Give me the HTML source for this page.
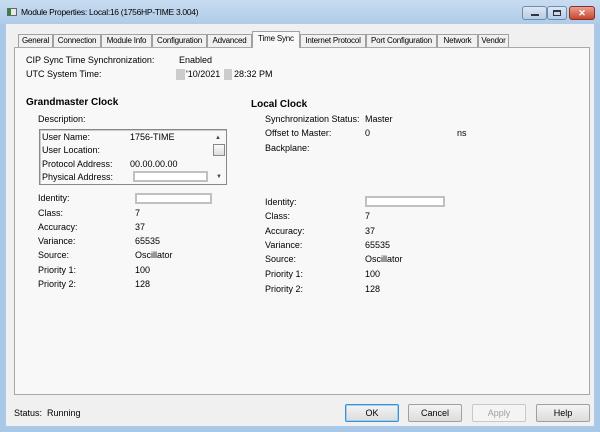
<!DOCTYPE html>
<html><head><meta charset="utf-8"><style>
*{margin:0;padding:0;box-sizing:border-box}
body{width:600px;height:432px;overflow:hidden;background:#a9c8e8;font-family:"Liberation Sans",sans-serif;font-size:9px;color:#000;position:relative}
.a{position:absolute;white-space:nowrap;line-height:11px}
.tb{position:absolute;top:6px;height:14px;border:1px solid #6d8cb0;border-radius:3px;background:linear-gradient(#dbe7f4,#b7cce4)}
.tab{position:absolute;top:34px;height:13px;border:1px solid #a0a0a0;border-bottom:none;background:#f0f0f0;text-align:center;line-height:12px;white-space:nowrap;font-size:8px;letter-spacing:-0.2px;overflow:hidden}
.btn{position:absolute;top:404px;height:18px;width:54px;border:1px solid #a0a0a0;border-radius:2px;background:linear-gradient(#f4f4f4,#dcdcdc);text-align:center;line-height:16px}
.gb{position:absolute;height:11px;border:2px solid #c0c0c0;background:#fff}
</style></head><body>
<div style="position:absolute;left:0;top:0;width:600px;height:24px;background:linear-gradient(#c8dcf0,#b0cbe8)"></div>
<div class="a" style="left:7px;top:8px;width:10px;height:8px;background:#e8e8e8;border:1px solid #666"><div style="width:3px;height:6px;background:#2a8a3a"></div></div>
<div class="a" style="left:21px;top:7px;font-size:8.5px;letter-spacing:-0.3px">Module Properties: Local:16 (1756HP-TIME 3.004)</div>
<div class="tb" style="left:522px;width:25px"><div style="position:absolute;left:8px;top:7px;width:8px;height:2px;background:#334"></div></div>
<div class="tb" style="left:547px;width:20px"><div style="position:absolute;left:5px;top:3px;width:8px;height:6px;border:1px solid #334;border-top-width:2px"></div></div>
<div class="tb" style="left:569px;width:26px;background:linear-gradient(#e8a090,#c8452f);border-color:#8a3020;color:#fff;text-align:center;font-weight:bold;font-size:9px;line-height:12px">✕</div>
<div style="position:absolute;left:6px;top:24px;width:588px;height:402px;background:#f0f0f0"></div>
<div style="position:absolute;left:14px;top:47px;width:576px;height:348px;border:1px solid #a8a8a8;background:#f8f8f8"></div>
<div class="tab" style="left:18px;width:35px">General</div>
<div class="tab" style="left:53px;width:48px">Connection</div>
<div class="tab" style="left:101px;width:51px">Module Info</div>
<div class="tab" style="left:152px;width:55px">Configuration</div>
<div class="tab" style="left:207px;width:45px">Advanced</div>
<div class="tab" style="left:252px;width:48px;top:31px;height:17px;background:#f8f8f8;line-height:13px">Time Sync</div>
<div class="tab" style="left:300px;width:66px">Internet Protocol</div>
<div class="tab" style="left:366px;width:71px">Port Configuration</div>
<div class="tab" style="left:437px;width:41px">Network</div>
<div class="tab" style="left:478px;width:31px">Vendor</div>
<div class="a" style="left:26px;top:55px">CIP Sync Time Synchronization:</div>
<div class="a" style="left:179px;top:55px">Enabled</div>
<div class="a" style="left:26px;top:69px">UTC System Time:</div>
<div class="a" style="left:176px;top:69px;width:9px;height:11px;background:#ccc"></div>
<div class="a" style="left:186px;top:69px">'10/2021</div>
<div class="a" style="left:224px;top:69px;width:8px;height:11px;background:#ccc"></div>
<div class="a" style="left:234px;top:69px">28:32 PM</div>
<div class="a" style="left:26px;top:97px;font-weight:bold;font-size:10px">Grandmaster Clock</div>
<div class="a" style="left:251px;top:99px;font-weight:bold;font-size:10px">Local Clock</div>
<div class="a" style="left:38px;top:114px">Description:</div>
<div style="position:absolute;left:39px;top:129px;width:188px;height:56px;border:1px solid #888;background:#f8f8f8;box-shadow:inset 1px 1px 0 #ccc"></div>
<div class="a" style="left:215px;top:133px;font-size:6px;color:#444">▲</div>
<div style="position:absolute;left:213px;top:144px;width:12px;height:12px;border:1px solid #888;background:linear-gradient(#fafafa,#ddd)"></div>
<div class="a" style="left:216px;top:172px;font-size:6px;color:#444">▼</div>
<div class="a" style="left:42px;top:132px">User Name:</div><div class="a" style="left:130px;top:132px">1756-TIME</div>
<div class="a" style="left:42px;top:145px">User Location:</div>
<div class="a" style="left:42px;top:159px">Protocol Address:</div><div class="a" style="left:130px;top:159px">00.00.00.00</div>
<div class="a" style="left:42px;top:172px">Physical Address:</div>
<div class="gb" style="left:133px;top:171px;width:75px"></div>
<div class="gb" style="left:135px;top:193px;width:77px"></div>
<div class="a" style="left:38px;top:193px">Identity:</div>
<div class="a" style="left:38px;top:208px">Class:</div><div class="a" style="left:135px;top:208px">7</div>
<div class="a" style="left:38px;top:222px">Accuracy:</div><div class="a" style="left:135px;top:222px">37</div>
<div class="a" style="left:38px;top:236px">Variance:</div><div class="a" style="left:135px;top:236px">65535</div>
<div class="a" style="left:38px;top:250px">Source:</div><div class="a" style="left:135px;top:250px">Oscillator</div>
<div class="a" style="left:38px;top:265px">Priority 1:</div><div class="a" style="left:135px;top:265px">100</div>
<div class="a" style="left:38px;top:279px">Priority 2:</div><div class="a" style="left:135px;top:279px">128</div>
<div class="a" style="left:265px;top:114px">Synchronization Status:</div><div class="a" style="left:365px;top:114px">Master</div>
<div class="a" style="left:265px;top:128px">Offset to Master:</div><div class="a" style="left:365px;top:128px">0</div><div class="a" style="left:457px;top:128px">ns</div>
<div class="a" style="left:265px;top:143px">Backplane:</div>
<div class="gb" style="left:365px;top:196px;width:80px"></div>
<div class="a" style="left:265px;top:197px">Identity:</div>
<div class="a" style="left:265px;top:211px">Class:</div><div class="a" style="left:365px;top:211px">7</div>
<div class="a" style="left:265px;top:226px">Accuracy:</div><div class="a" style="left:365px;top:226px">37</div>
<div class="a" style="left:265px;top:240px">Variance:</div><div class="a" style="left:365px;top:240px">65535</div>
<div class="a" style="left:265px;top:254px">Source:</div><div class="a" style="left:365px;top:254px">Oscillator</div>
<div class="a" style="left:265px;top:269px">Priority 1:</div><div class="a" style="left:365px;top:269px">100</div>
<div class="a" style="left:265px;top:284px">Priority 2:</div><div class="a" style="left:365px;top:284px">128</div>
<div class="a" style="left:14px;top:408px">Status:&nbsp; Running</div>
<div class="btn" style="left:345px;border-color:#3c8fd0;box-shadow:inset 0 0 0 1px #9cd0f4">OK</div>
<div class="btn" style="left:408px">Cancel</div>
<div class="btn" style="left:472px;color:#a0a0a0;border-color:#c8c8c8;background:#f4f4f4">Apply</div>
<div class="btn" style="left:536px">Help</div>
</body></html>
